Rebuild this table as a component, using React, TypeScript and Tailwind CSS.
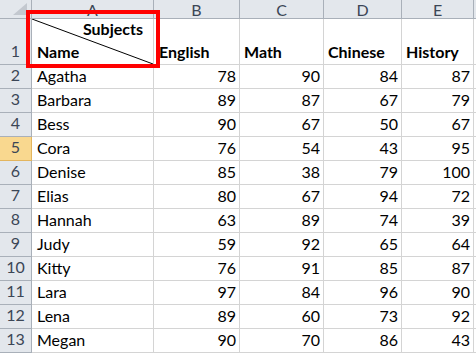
import React from "react";

type Row = { name: string; english: number; math: number; chinese: number; history: number };

const rows: Row[] = [
  { name: "Agatha", english: 78, math: 90, chinese: 84, history: 87 },
  { name: "Barbara", english: 89, math: 87, chinese: 67, history: 79 },
  { name: "Bess", english: 90, math: 67, chinese: 50, history: 67 },
  { name: "Cora", english: 76, math: 54, chinese: 43, history: 95 },
  { name: "Denise", english: 85, math: 38, chinese: 79, history: 100 },
  { name: "Elias", english: 80, math: 67, chinese: 94, history: 72 },
  { name: "Hannah", english: 63, math: 89, chinese: 74, history: 39 },
  { name: "Judy", english: 59, math: 92, chinese: 65, history: 64 },
  { name: "Kitty", english: 76, math: 91, chinese: 85, history: 87 },
  { name: "Lara", english: 97, math: 84, chinese: 96, history: 90 },
  { name: "Lena", english: 89, math: 60, chinese: 73, history: 92 },
  { name: "Megan", english: 90, math: 70, chinese: 86, history: 43 },
];

const cols = ["A", "B", "C", "D", "E", ""];

const cell = "border-r border-b border-[#d4d4d4] flex items-end leading-[20px] pb-[2px]";
const head = "border-r border-b border-[#a9b0b9] bg-[#e3e7ec] flex items-center justify-center text-[#3b4656]";

export default function App() {
  return (
    <div className="relative w-[476px] h-[353px] overflow-hidden bg-white text-[16px] text-black" style={{ fontFamily: "Lato, 'Open Sans', sans-serif" }}>
      <div className="grid grid-cols-[32px_122px_86px_84px_78px_72px_1fr] grid-rows-[19px_46px_repeat(12,24px)]">
        {/* column headers */}
        <div className={`${head} relative`}>
          <div className="absolute right-[4px] bottom-[3px] w-0 h-0 border-l-[14px] border-l-transparent border-b-[12px] border-b-[#c3c8cf]" />
        </div>
        {cols.map((c, i) => (
          <div key={i} className={`${head} pt-[1px] ${i === cols.length - 1 ? "border-r-0" : ""}`}>
            {c}
          </div>
        ))}

        {/* row 1 */}
        <div className={`${head} items-end pb-[1px]`}>1</div>
        <div className={`${cell} relative font-bold pl-[5px]`}>
          <svg className="absolute inset-0 w-full h-full" preserveAspectRatio="none" viewBox="0 0 100 100">
            <line x1="0" y1="0" x2="100" y2="100" stroke="#000" strokeWidth="1" vectorEffect="non-scaling-stroke" />
          </svg>
          <span className="absolute right-[10px] top-0">Subjects</span>
          <span>Name</span>
        </div>
        <div className={`${cell} font-bold pl-[5px]`}>English</div>
        <div className={`${cell} font-bold pl-[4px]`}>Math</div>
        <div className={`${cell} font-bold pl-[4px]`}>Chinese</div>
        <div className={`${cell} font-bold pl-[4px]`}>History</div>
        <div className={`${cell} border-r-0`} />

        {rows.map((r, i) => {
          const n = i + 2;
          const sel = n === 5;
          return (
            <React.Fragment key={r.name}>
              <div
                className={`${head} items-end pb-[1px] ${sel ? "bg-[#f9d88f] border-[#e3b55e]" : ""}`}
              >
                {n}
              </div>
              <div className={`${cell} pl-[5px]`}>{r.name}</div>
              <div className={`${cell} justify-end pr-[3px]`}>{r.english}</div>
              <div className={`${cell} justify-end pr-[3px]`}>{r.math}</div>
              <div className={`${cell} justify-end pr-[3px]`}>{r.chinese}</div>
              <div className={`${cell} justify-end pr-[3px]`}>{r.history}</div>
              <div className={`${cell} border-r-0`} />
            </React.Fragment>
          );
        })}
      </div>

      {/* selection highlight on A1 */}
      <div className="absolute left-[26px] top-[10px] w-[134px] h-[58px] border-[4px] border-[#ff0000] pointer-events-none" />
    </div>
  );
}
